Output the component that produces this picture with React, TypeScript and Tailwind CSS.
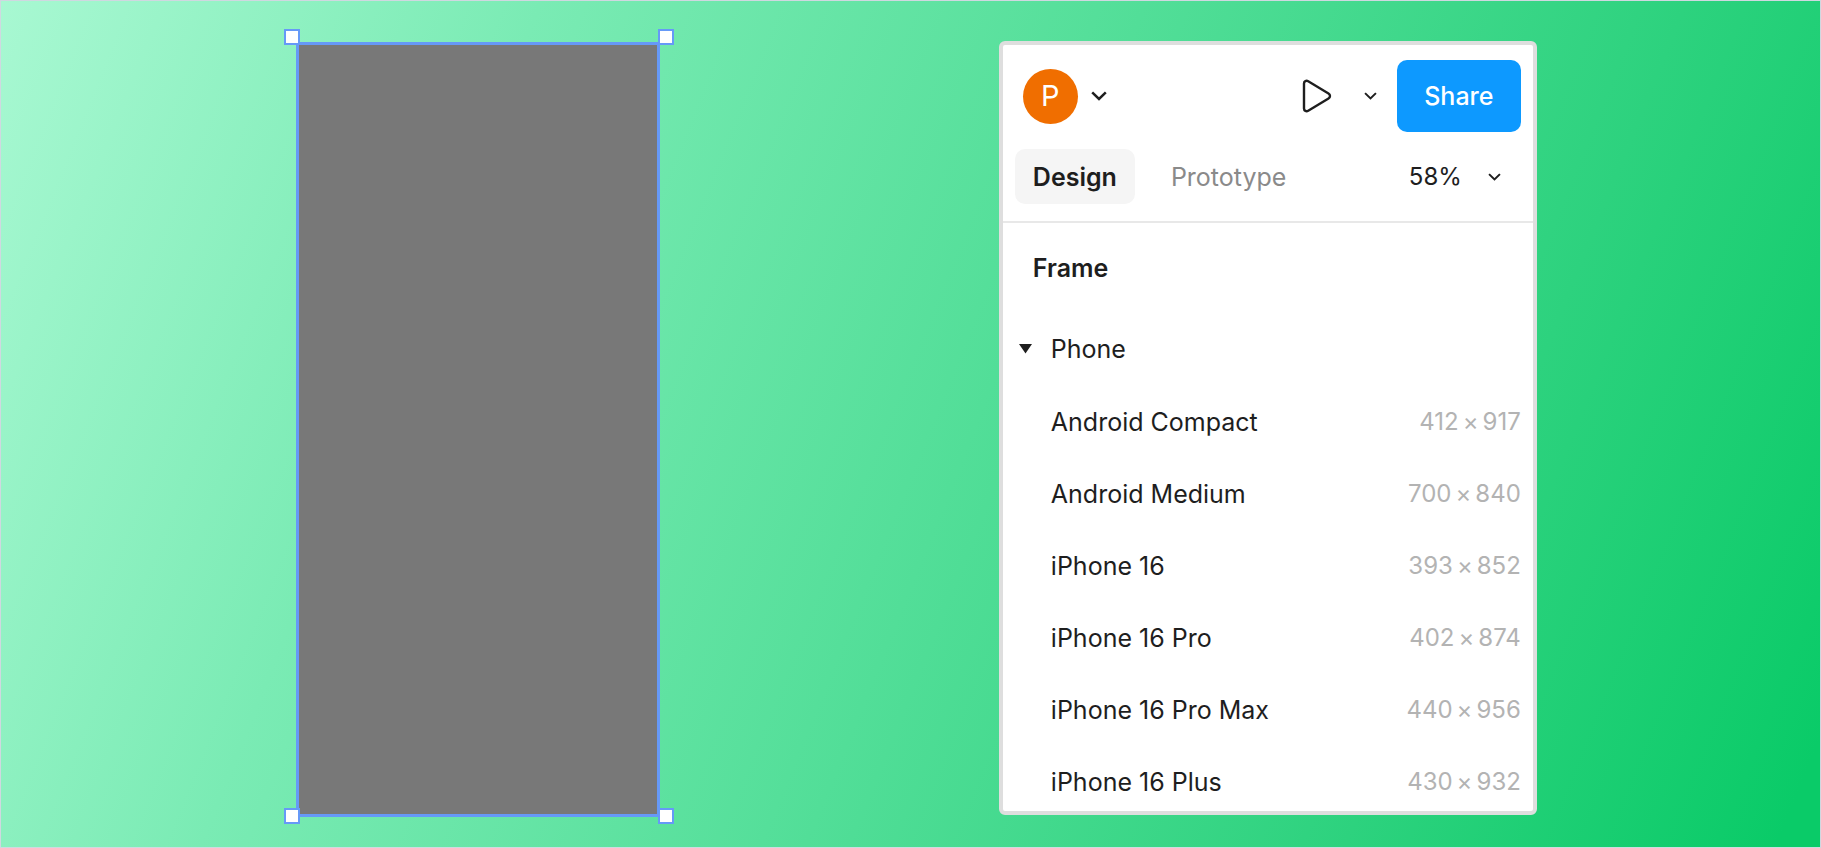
import React, { useState } from "react";

interface Preset {
  name: string;
  width: number;
  height: number;
}

const presets: Preset[] = [
  { name: "Android Compact", width: 412, height: 917 },
  { name: "Android Medium", width: 700, height: 840 },
  { name: "iPhone 16", width: 393, height: 852 },
  { name: "iPhone 16 Pro", width: 402, height: 874 },
  { name: "iPhone 16 Pro Max", width: 440, height: 956 },
  { name: "iPhone 16 Plus", width: 430, height: 932 },
];

const Chevron: React.FC<{ className: string }> = ({ className }) => (
  <svg viewBox="0 0 16 10" fill="none" className={className} aria-hidden="true">
    <path d="M1.2 1.4 8 8l6.800-6.600" stroke="currentColor" strokeWidth="2.500" />
  </svg>
);

const Canvas: React.FC = () => (
  <div className="relative w-[390px] pt-[13px] pr-[14px] pb-[7px] pl-3">
    <div className="h-full border-3 border-[#6699f7] bg-[#787878]"></div>

    {/* Resize handles */}
    <span className="absolute top-0 left-0 size-4 border-2 border-[#6699f7] bg-white"></span>
    <span className="absolute top-0 right-0 size-4 border-2 border-[#6699f7] bg-white"></span>
    <span className="absolute bottom-0 left-0 size-4 border-2 border-[#6699f7] bg-white"></span>
    <span className="absolute right-0 bottom-0 size-4 border-2 border-[#6699f7] bg-white"></span>
  </div>
);

const Panel: React.FC = () => {
  const [tab, setTab] = useState("design");
  const [isOpen, setIsOpen] = useState(true);

  return (
    <aside className="mt-3 w-[538px] self-start rounded-md border-4 border-[#dedede] bg-white text-[25px] leading-[30px] text-[#1e1e1e]">
      {/* Toolbar */}
      <div className="flex items-center justify-between px-3 pt-[15px]">
        <button className="ml-2 flex items-center gap-[13px]" aria-label="Account">
          <span className="flex size-[55px] items-center justify-center rounded-full bg-[#f06e00] text-[29px] text-white">
            P
          </span>
          <Chevron className="h-[10px] w-4" />
        </button>

        <div className="flex items-center">
          <button aria-label="Present">
            <svg width="30" height="34" viewBox="0 0 30 34" fill="none" aria-hidden="true">
              <path
                d="M2 4.500C2 2.200 4.300 1.200 6.200 2.300L26.500 14.500C28.500 15.700 28.500 18.300 26.500 19.500L6.200 31.700C4.300 32.800 2 31.800 2 29.500Z"
                stroke="currentColor"
                strokeWidth="2.4"
                strokeLinejoin="round"
              />
            </svg>
          </button>
          <button className="mr-5 ml-8" aria-label="Present options">
            <Chevron className="h-2 w-[13px]" />
          </button>
          <button className="h-[72px] w-[124px] rounded-[10px] bg-[#0d99ff] font-medium text-white">
            Share
          </button>
        </div>
      </div>

      {/* Tabs */}
      <div className="flex items-center justify-between border-b-2 border-[#e8e8e8] px-3 pt-[17px] pb-[17px]">
        <div role="tablist" className="flex">
          <button
            role="tab"
            aria-selected={tab === "design"}
            onClick={() => setTab("design")}
            className={`h-[55px] rounded-[10px] px-[18px] ${
              tab === "design" ? "bg-[#f5f5f5] font-semibold" : "text-[#8a8a8a]"
            }`}
          >
            Design
          </button>
          <button
            role="tab"
            aria-selected={tab === "prototype"}
            onClick={() => setTab("prototype")}
            className={`ml-[18px] h-[55px] rounded-[10px] px-[18px] ${
              tab === "prototype" ? "bg-[#f5f5f5] font-semibold" : "text-[#8a8a8a]"
            }`}
          >
            Prototype
          </button>
        </div>
        <button
          className="mr-5 flex items-center gap-[26px] text-[24px] leading-[30px]"
          aria-label="Zoom"
        >
          58%
          <Chevron className="h-2 w-[13px]" />
        </button>
      </div>

      {/* Frame presets */}
      <div className="pt-[30px] pr-3 pb-[14px] pl-4">
        <h2 className="pl-[14px] font-semibold">Frame</h2>
        <button
          onClick={() => setIsOpen(!isOpen)}
          aria-expanded={isOpen}
          className="mt-[51px] flex items-center gap-[19px]"
        >
          <svg width="13" height="10" viewBox="0 0 13 10" aria-hidden="true">
            <path d="M0 0h13L6.500 9.500z" fill="currentColor" />
          </svg>
          Phone
        </button>
        {isOpen && (
          <ul className="mt-[43px] flex flex-col gap-[42px] pl-8">
            {presets.map((preset) => (
              <li key={preset.name}>
                <button className="flex w-full items-center justify-between">
                  <span>{preset.name}</span>
                  <span className="flex gap-1 text-[24px] leading-[30px] text-[#b3b3b3]">
                    <span>{preset.width}</span>
                    <span>×</span>
                    <span>{preset.height}</span>
                  </span>
                </button>
              </li>
            ))}
          </ul>
        )}
      </div>
    </aside>
  );
};

const App: React.FC = () => {
  return (
    <main className="flex min-h-screen justify-between border border-[#cfd8e0] bg-linear-[112deg,#a8f8d2_0%,#7aebb4_25%,#52de98_53%,#2dd27e_78%,#0acb68_98%] px-[15.55%] pt-7 pb-[23px] font-['Inter',sans-serif]">
      <Canvas />
      <Panel />
    </main>
  );
};

export default App;
